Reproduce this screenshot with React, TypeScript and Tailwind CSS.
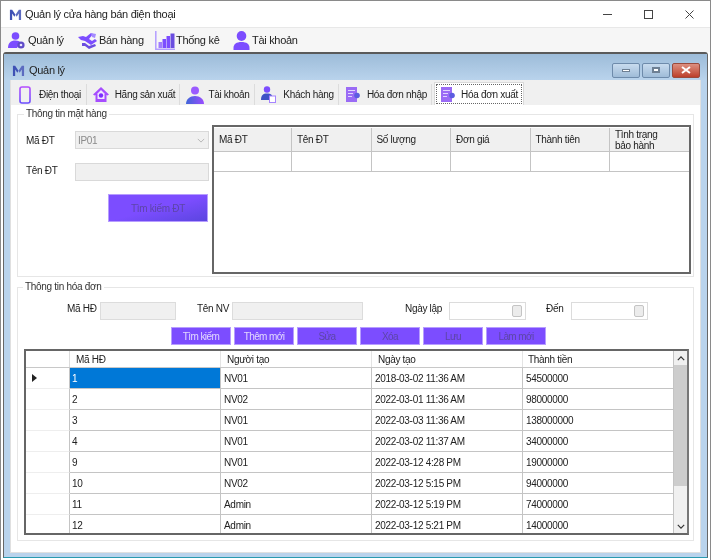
import React from "react";

const P = "#7c4dff";

function LogoM({ className = "" }: { className?: string }) {
  return (
    <svg viewBox="0 0 14 14" className={className}>
      <path d="M1 13V2h2.4L7 7.4 5.8 9.4 3.4 6v7z" fill="#3f51b5" />
      <path d="M13 13V2h-2.4L7 7.4l1.2 2L10.6 6v7z" fill="#5c6bc0" />
    </svg>
  );
}

function PersonGear() {
  return (
    <svg viewBox="0 0 17 17" className="w-[17px] h-[17px] shrink-0">
      <circle cx="7.5" cy="4" r="3.8" fill={P} />
      <path d="M0 16c0-5 2.500-7.500 7.500-7.500 2.500 0 4 .7 5 2L9 16z" fill={P} />
      <circle cx="13" cy="13" r="3.600" fill="#5f4bc8" />
      <circle cx="13" cy="13" r="1.300" fill="#e8e4ff" />
    </svg>
  );
}
function HandShake() {
  return (
    <svg viewBox="0 0 20 17" className="w-[20px] h-[17px] shrink-0">
      <path d="M0 5l5-1 3 1 5-4 2 1-4 5 3 2 3-2 2 2-6 4-6-4-4-1z" fill={P} />
      <path d="M13 1l5 1-1 4-3-1z" fill="#a48bff" />
      <path d="M4 11l3 0 4 3 6-2 1 2-7 3-4-3-3 0z" fill="#6a4de0" />
    </svg>
  );
}
function Bars() {
  return (
    <svg viewBox="0 0 20 19" className="w-[20px] h-[19px] shrink-0">
      <path d="M.8 0v18.200H20" stroke="#b39dff" strokeWidth="1.500" fill="none" />
      <rect x="3.500" y="11" width="3.500" height="6" fill="#a07cff" />
      <rect x="7.500" y="8" width="3.500" height="9" fill={P} />
      <rect x="11.500" y="5" width="3.500" height="12" fill={P} />
      <rect x="15.500" y="2.500" width="4" height="14.500" fill="#6a4de0" />
    </svg>
  );
}
function Person({ className = "w-5 h-5" }: { className?: string }) {
  return (
    <svg viewBox="0 0 17 19" className={`${className} shrink-0`}>
      <ellipse cx="8.500" cy="5" rx="4.800" ry="5" fill={P} />
      <path d="M.5 19v-2c0-4 3-6 8-6s8 2 8 6v2z" fill={P} />
    </svg>
  );
}
function Phone() {
  return (
    <svg viewBox="0 0 12 18" className="w-[12px] h-[18px] shrink-0">
      <defs>
        <linearGradient id="ph" x1="0" y1="0" x2="0" y2="1">
          <stop offset="0" stopColor="#b44dff" />
          <stop offset="1" stopColor="#6a4dff" />
        </linearGradient>
      </defs>
      <rect x="1" y="1" width="10" height="16" rx="2" fill="none" stroke="url(#ph)" strokeWidth="1.600" />
    </svg>
  );
}
function House() {
  return (
    <svg viewBox="0 0 16 15" className="w-[16px] h-[15px] shrink-0">
      <path d="M8 0L0 7.500l1.500 1L2.500 8v7h11V8l1 .5 1.500-1z" fill="#a64dff" />
      <path d="M8 3L4.500 6.500V12h7V6.500z" fill="#f0e6ff" />
      <circle cx="8" cy="8.500" r="2.200" fill="#7c2dff" />
    </svg>
  );
}
function PersonLaptop() {
  return (
    <svg viewBox="0 0 18 18" className="w-[18px] h-[18px] shrink-0">
      <defs>
        <linearGradient id="pl" x1="0" y1="0" x2="1" y2="0">
          <stop offset="0" stopColor="#3f66d8" />
          <stop offset="1" stopColor="#9a4dff" />
        </linearGradient>
      </defs>
      <circle cx="9" cy="4.500" r="4" fill="#9a5bff" />
      <path d="M0 18c0-5 4-8 9-8s9 3 9 8z" fill="url(#pl)" />
    </svg>
  );
}
function PersonCard() {
  return (
    <svg viewBox="0 0 15 17" className="w-[15px] h-[17px] shrink-0">
      <circle cx="6" cy="3.500" r="3.200" fill={P} />
      <path d="M0 14c0-5 2-6.500 6-6.500s5 1.500 5 2.500v4z" fill="#3f51c5" />
      <rect x="8.500" y="10" width="6" height="6.500" fill="#fff" stroke="#a684ff" />
    </svg>
  );
}
function Invoice() {
  return (
    <svg viewBox="0 0 15 15" className="w-[15px] h-[15px] shrink-0">
      <rect x="1" y="0" width="11" height="15" fill="#9a6bf5" />
      <path d="M3 3.500h7M3 6.500h5M3 9.500h4" stroke="#e0d4ff" />
      <circle cx="12" cy="8.500" r="2.800" fill="#5c5ce0" />
    </svg>
  );
}

function MenuItem({ icon, label, w, gap }: { icon: React.ReactNode; label: string; w: string; gap: string }) {
  return (
    <div className={`flex items-center shrink-0 ${w} ${gap}`}>
      {icon}
      <span className="whitespace-nowrap">{label}</span>
    </div>
  );
}

function Tab({ icon, label, w, gap, active }: { icon: React.ReactNode; label: string; w: string; gap: string; active?: boolean }) {
  return active ? (
    <div className={`${w} shrink-0 h-[23px] -mt-[2px] bg-white border border-[#dadada] border-b-0 pt-px px-px`}>
      <div className={`w-full h-[20px] border border-dotted border-[#666] flex items-center justify-center ${gap}`}>
        {icon}
        <span className="whitespace-nowrap">{label}</span>
      </div>
    </div>
  ) : (
    <div className={`${w} shrink-0 h-[21px] pl-[2px] bg-[#f0f0f0] border-r border-[#dcdcdc] flex items-center justify-center ${gap}`}>
      {icon}
      <span className="whitespace-nowrap">{label}</span>
    </div>
  );
}

function Btn({ label, enabled }: { label: string; enabled?: boolean }) {
  return (
    <div
      className={`w-[60px] h-[18px] bg-[#7c4dff] border border-[#b79dff] flex items-center justify-center text-[10px] tracking-[-0.6px] ${
        enabled ? "text-[#e2d8ff]" : "text-[#5d45a8]"
      }`}
    >
      {label}
    </div>
  );
}

function DateBox() {
  return (
    <div className="w-[77px] h-[18px] bg-white border border-[#dcdcdc] flex items-center justify-end pr-[3px]">
      <div className="w-[10px] h-[12px] bg-[#ececec] border border-[#c4c4c4] rounded-[2px]" />
    </div>
  );
}

const rows = [
  ["1", "NV01", "2018-03-02 11:36 AM", "54500000"],
  ["2", "NV02", "2022-03-01 11:36 AM", "98000000"],
  ["3", "NV01", "2022-03-03 11:36 AM", "138000000"],
  ["4", "NV01", "2022-03-02 11:37 AM", "34000000"],
  ["9", "NV01", "2022-03-12 4:28 PM", "19000000"],
  ["10", "NV02", "2022-03-12 5:15 PM", "94000000"],
  ["11", "Admin", "2022-03-12 5:19 PM", "74000000"],
  ["12", "Admin", "2022-03-12 5:21 PM", "14000000"],
];

const topHeads = ["Tên ĐT", "Số lượng", "Đơn giá", "Thành tiên"];

export default function App() {
  return (
    <div
      className="w-[711px] h-[560px] overflow-hidden bg-white border-t border-l border-r border-[#8a8a8a] flex flex-col text-[#222] text-[10px] tracking-[-0.3px] blur-[0.3px]"
      style={{ fontFamily: '"Liberation Sans", Arial, sans-serif' }}
    >
      {/* title bar */}
      <div className="h-[26px] shrink-0 flex items-center pl-[8px] bg-white">
        <LogoM className="w-[13px] h-[13px]" />
        <span className="ml-[3px] text-[11px] whitespace-nowrap">Quản lý cửa hàng bán điện thoại</span>
        <div className="ml-auto flex items-center gap-[32px] pr-[16px]">
          <div className="w-[9px] h-px bg-[#444]" />
          <div className="w-[9px] h-[9px] border border-[#444]" />
          <svg viewBox="0 0 9 9" className="w-[9px] h-[9px]" stroke="#444" fill="none">
            <path d="M.5.5l8 8M8.500.5l-8 8" />
          </svg>
        </div>
      </div>
      {/* menu */}
      <div className="h-[25px] shrink-0 bg-[#f6f6f6] border-t border-[#e8e8e8] flex items-center pl-[7px] text-[11px]">
        <MenuItem w="w-[70px]" gap="gap-[3px]" icon={<PersonGear />} label="Quản lý" />
        <MenuItem w="w-[77px]" gap="gap-[1px]" icon={<HandShake />} label="Bán hàng" />
        <MenuItem w="w-[78px]" gap="gap-[1px]" icon={<Bars />} label="Thống kê" />
        <MenuItem w="w-[70px]" gap="gap-[2px]" icon={<Person className="w-[17px] h-[19px]" />} label="Tài khoản" />
      </div>
      {/* MDI child window */}
      <div className="flex-1 mx-[2px] mb-[2px] border-t-2 border-x border-b border-t-[#5a5a5a] border-x-[#666] border-b-[#2a9ab0] rounded-t-[3px] bg-[#b9d3ec] flex flex-col">
        <div className="h-[26px] shrink-0 flex items-center pt-[6px] pl-[8px] pr-[7px] bg-gradient-to-b from-[#9dbcd9] to-[#b9d3ec]">
          <LogoM className="w-[13px] h-[13px]" />
          <span className="ml-[4px] text-[11px]">Quản lý</span>
          <div className="ml-auto flex items-center gap-[2px]">
            <div className="w-[28px] h-[15px] rounded-[2px] border border-[#6e8bab] bg-gradient-to-b from-[#c8dbee] to-[#9fbcd8] flex items-center justify-center">
              <div className="w-[8px] h-[3px] bg-white border border-[#6d7f93]" />
            </div>
            <div className="w-[28px] h-[15px] rounded-[2px] border border-[#6e8bab] bg-gradient-to-b from-[#c8dbee] to-[#9fbcd8] flex items-center justify-center">
              <div className="w-[8px] h-[6px] bg-white border-2 border-[#6d7f93]" />
            </div>
            <div className="w-[28px] h-[15px] rounded-[2px] border border-[#9a4a3c] bg-gradient-to-b from-[#dc8f80] to-[#bc3e2a] flex items-center justify-center">
              <svg viewBox="0 0 10 8" className="w-[10px] h-[8px]" stroke="#fff" strokeWidth="2" fill="none">
                <path d="M1 1l8 6M9 1L1 7" />
              </svg>
            </div>
          </div>
        </div>
        <div className="flex-1 mx-[6px] mb-[4px] bg-[#f0f0f0] border-x border-b border-[#e0e0e0] flex flex-col">
          <div className="h-[21px] mt-[4px] shrink-0 flex items-end pl-px">
            <Tab w="w-[75px]" gap="gap-[8px]" icon={<Phone />} label="Điện thoại" />
            <Tab w="w-[93px]" gap="gap-[6px]" icon={<House />} label="Hãng sản xuất" />
            <Tab w="w-[75px]" gap="gap-[4px]" icon={<PersonLaptop />} label="Tài khoản" />
            <Tab w="w-[84px]" gap="gap-[7px]" icon={<PersonCard />} label="Khách hàng" />
            <Tab w="w-[93px]" gap="gap-[7px]" icon={<Invoice />} label="Hóa đơn nhập" />
            <div className="ml-[2px]">
              <Tab w="w-[90px]" gap="gap-[6px]" icon={<Invoice />} label="Hóa đơn xuất" active />
            </div>
          </div>
          <div className="flex-1 bg-white px-[6px] pt-[2px] flex flex-col gap-[3px]">
            {/* group 1 */}
            <fieldset className="h-[170px] border border-[#e6e6e6] pl-[8px] flex">
              <legend className="-ml-[2px] px-[2px] leading-[14px] text-[#333] whitespace-nowrap">Thông tin mặt hàng</legend>
              <div className="w-[186px] shrink-0 flex flex-col pt-[10px]">
                <div className="flex items-center h-[18px]">
                  <span className="w-[49px] whitespace-nowrap">Mã ĐT</span>
                  <div className="w-[134px] h-[18px] bg-[#f0f0f0] border border-[#d9d9d9] flex items-center justify-between pl-[2px] pr-[3px] text-[#8a8a8a]">
                    <span>IP01</span>
                    <svg viewBox="0 0 10 6" className="w-[8px] h-[5px]" fill="none" stroke="#aaa">
                      <path d="M1 1l4 4 4-4" />
                    </svg>
                  </div>
                </div>
                <div className="flex items-center h-[18px] mt-[14px]">
                  <span className="w-[49px] pb-[4px] whitespace-nowrap">Tên ĐT</span>
                  <div className="w-[134px] h-[18px] bg-[#f0f0f0] border border-[#d9d9d9]" />
                </div>
                <div className="ml-[82px] mt-[13px] w-[100px] h-[28px] border border-[#b79dff] bg-gradient-to-br from-[#7c4dff] via-[#7c4dff] to-[#5b45e0] flex items-center justify-center text-[#5d45a8]">
                  Tìm kiếm ĐT
                </div>
              </div>
              <div className="w-[479px] h-[149px] mt-[4px] border-2 border-[#666] bg-white flex flex-col">
                <div className="h-[24px] mt-px flex bg-[#f0f0f0] border-b border-[#c4c4c4]">
                  <div className="w-[78px] flex items-center pl-[5px] border-r border-[#c4c4c4]">Mã ĐT</div>
                  {topHeads.map((h) => (
                    <div key={h} className="w-[79.500px] flex items-center pl-[5px] border-r border-[#c4c4c4]">
                      {h}
                    </div>
                  ))}
                  <div className="flex-1 pl-[5px] leading-[11px] flex items-center">
                    Tình trạng
                    <br />
                    bảo hành
                  </div>
                </div>
                <div className="h-[20px] flex border-b border-[#c4c4c4]">
                  <div className="w-[78px] border-r border-[#c4c4c4]" />
                  {[0, 1, 2, 3].map((i) => (
                    <div key={i} className="w-[79.500px] border-r border-[#c4c4c4]" />
                  ))}
                </div>
              </div>
            </fieldset>
            {/* group 2 */}
            <fieldset className="h-[261px] border border-[#e6e6e6] pl-[6px] flex flex-col">
              <legend className="-ml-px px-[2px] leading-[14px] text-[#333] whitespace-nowrap">Thông tin hóa đơn</legend>
              <div className="h-[18px] mt-[8px] flex items-center whitespace-nowrap">
                <span className="ml-[43px] w-[33px] pb-[5px]">Mã HĐ</span>
                <div className="w-[76px] h-[18px] bg-[#f0f0f0] border border-[#dcdcdc]" />
                <span className="ml-[21px] w-[35px] pb-[5px]">Tên NV</span>
                <div className="w-[131px] h-[18px] bg-[#f0f0f0] border border-[#dcdcdc]" />
                <span className="ml-[42px] w-[44px] pb-[6px]">Ngày lập</span>
                <DateBox />
                <span className="ml-[20px] w-[25px] pb-[6px]">Đến</span>
                <DateBox />
              </div>
              <div className="h-[18px] mt-[7px] flex gap-[3px] pl-[147px]">
                <Btn label="Tìm kiếm" enabled />
                <Btn label="Thêm mới" enabled />
                <Btn label="Sửa" />
                <Btn label="Xóa" />
                <Btn label="Lưu" />
                <Btn label="Làm mới" />
              </div>
              <div className="mt-[4px] w-[665px] h-[186px] border-2 border-[#666] border-r-[#777] bg-white flex">
                <div className="w-[647px] shrink-0 flex flex-col overflow-hidden">
                  <div className="h-[17px] shrink-0 flex border-b border-[#c8c8c8]">
                    <div className="w-[44px] border-r border-[#dcdcdc]" />
                    <div className="w-[151px] border-r border-[#e4e4e4] pl-[6px] flex items-center">Mã HĐ</div>
                    <div className="w-[151px] border-r border-[#e4e4e4] pl-[6px] flex items-center">Người tạo</div>
                    <div className="w-[151px] border-r border-[#e4e4e4] pl-[6px] flex items-center">Ngày tạo</div>
                    <div className="flex-1 pl-[5px] flex items-center">Thành tiền</div>
                  </div>
                  {rows.map((r, i) => (
                    <div key={r[0]} className="h-[21px] shrink-0 flex">
                      <div className="w-[44px] border-r border-b border-r-[#c4c4c4] border-b-[#eeeeee] flex items-center pl-[6px]">
                        {i === 0 && (
                          <svg viewBox="0 0 5 8" className="w-[5px] h-[8px]">
                            <path d="M0 0l5 4-5 4z" fill="#222" />
                          </svg>
                        )}
                      </div>
                      <div
                        className={`w-[151px] border-r border-b border-[#c4c4c4] pl-[2px] flex items-center ${
                          i === 0 ? "bg-[#0078d7] text-white" : ""
                        }`}
                      >
                        {r[0]}
                      </div>
                      <div className="w-[151px] border-r border-b border-[#c4c4c4] pl-[3px] flex items-center">{r[1]}</div>
                      <div className="w-[151px] border-r border-b border-[#c4c4c4] pl-[3px] flex items-center">{r[2]}</div>
                      <div className="flex-1 border-b border-[#c4c4c4] pl-[3px] flex items-center">{r[3]}</div>
                    </div>
                  ))}
                </div>
                <div className="flex-1 bg-[#f0f0f0] border-l border-[#c4c4c4] flex flex-col">
                  <div className="h-[14px] shrink-0 flex items-center justify-center">
                    <svg viewBox="0 0 10 6" className="w-[8px] h-[5px]" fill="none" stroke="#333" strokeWidth="1.500">
                      <path d="M1 5l4-4 4 4" />
                    </svg>
                  </div>
                  <div className="h-[121px] shrink-0 bg-[#cdcdcd]" />
                  <div className="flex-1 flex items-end justify-center pb-[4px]">
                    <svg viewBox="0 0 10 6" className="w-[8px] h-[5px]" fill="none" stroke="#333" strokeWidth="1.500">
                      <path d="M1 1l4 4 4-4" />
                    </svg>
                  </div>
                </div>
              </div>
            </fieldset>
          </div>
        </div>
      </div>
    </div>
  );
}
